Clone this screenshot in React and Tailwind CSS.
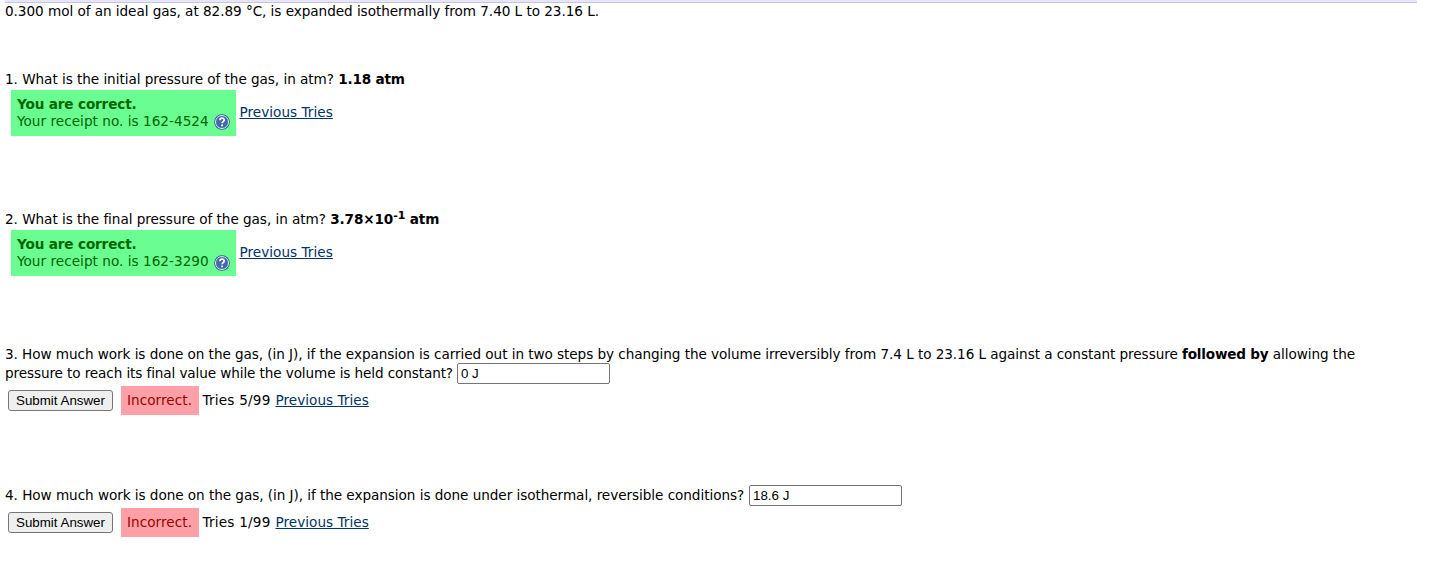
import React from 'react';

function HelpIcon() {
  return (
    <svg className="block size-4 shrink-0" viewBox="0 0 16 16">
      <circle cx="8" cy="8" r="7.8" fill="#31548f" />
      <circle cx="8" cy="8" r="6.5" fill="#4268ad" stroke="#e3ebf8" strokeWidth="1" />
      <path d="M5.9 6.2C5.9 3.4 10.3 3.5 10.2 6.1C10.1 7.6 8.1 7.7 8.1 9.3" fill="none" stroke="#fff" strokeWidth="1.7" />
      <rect x="7.2" y="10.5" width="1.8" height="1.8" fill="#fff" />
    </svg>
  );
}

function PreviousTries() {
  return (
    <a href="#" className="tracking-[0.03px] text-[#003366] underline underline-offset-1">Previous Tries</a>
  );
}

function Correct({ receipt, children }) {
  return (
    <div className="flex items-start ml-1.5 h-[46px]">
      <div className="flex flex-col pt-1.5 pl-1.5 w-[225px] h-[46px] bg-[#6afd92] text-[#006600]">
        <b className="h-[17px] tracking-[-0.15px]">You are correct.</b>
        <div className="flex items-start">
          <span className="w-[197px] tracking-[0.03px]">Your receipt no. is {receipt}</span>
          {children}
        </div>
      </div>
      <div className="mt-3.5 ml-[3.5px]"><PreviousTries /></div>
    </div>
  );
}

function Incorrect({ tries }) {
  return (
    <div className="flex items-center ml-[3px] h-[29px]">
      <button className="w-[105px] h-[21px] rounded-[3px] border border-[#767676] bg-[#efefef] font-['Liberation_Sans',sans-serif] text-[13.33px] leading-[19px] tracking-normal text-black">
        Submit Answer
      </button>
      <div className="flex items-center ml-2 pl-1.5 w-[78px] h-[29px] bg-[#ffa0a6] tracking-[0.05px] text-[#990000]">Incorrect.</div>
      <div className="ml-[3.5px] w-[73px] tracking-[0.2px]">Tries {tries}/99</div>
      <PreviousTries />
    </div>
  );
}

function Answer({ value }) {
  return (
    <input
      defaultValue={value}
      className="block px-[3px] w-[153px] h-[21px] rounded-[2px] border border-[#767676] bg-white font-['Liberation_Sans',sans-serif] text-[13.33px] tracking-normal text-black"
    />
  );
}

function App() {
  return (
    <div className="h-[584px] overflow-hidden bg-white pl-[5px] font-['DejaVu_Sans',sans-serif] text-[13.6px] leading-[17px] tracking-[-0.05px] text-black whitespace-nowrap">
      <div className="w-[1412px] h-[3px] border-b border-[#c8c8cc] bg-[#e6e4ff]" />
      <p>0.300 mol of an ideal gas, at 82.89 °C, is expanded isothermally from 7.40 L to 23.16 L.</p>

      <div className="mt-[51px]">
        <p className="h-[19px]">1. What is the initial pressure of the gas, in atm? <b className="tracking-[-0.2px]">1.18 atm</b></p>
        <Correct receipt="162-4524">
          <div className="pt-px"><HelpIcon /></div>
        </Correct>
      </div>

      <div className="mt-[75px]">
        <p className="h-[19px]">
          2. What is the final pressure of the gas, in atm? <b className="tracking-[-0.12px]">3.78×10<sup className="text-[11px]">-1</sup> atm</b>
        </p>
        <Correct receipt="162-3290">
          <div className="pt-0.5"><HelpIcon /></div>
        </Correct>
      </div>

      <div className="mt-[70px]">
        <p className="tracking-[-0.065px]">
          3. How much work is done on the gas, (in J), if the expansion is carried out in two steps by changing the volume irreversibly from 7.4 L to 23.16 L against a constant pressure <b className="tracking-[-0.2px]">followed by</b> allowing the
        </p>
        <div className="flex items-center h-[21px]">
          <span className="w-[452px] tracking-[-0.11px]">pressure to reach its final value while the volume is held constant?</span>
          <Answer value="0 J" />
        </div>
        <div className="mt-0.5"><Incorrect tries={5} /></div>
      </div>

      <div className="mt-[70px]">
        <div className="flex items-center h-[21px]">
          <span className="w-[744px] tracking-[-0.055px]">4. How much work is done on the gas, (in J), if the expansion is done under isothermal, reversible conditions?</span>
          <Answer value="18.6 J" />
        </div>
        <div className="mt-0.5"><Incorrect tries={1} /></div>
      </div>
    </div>
  );
}

export default App;
